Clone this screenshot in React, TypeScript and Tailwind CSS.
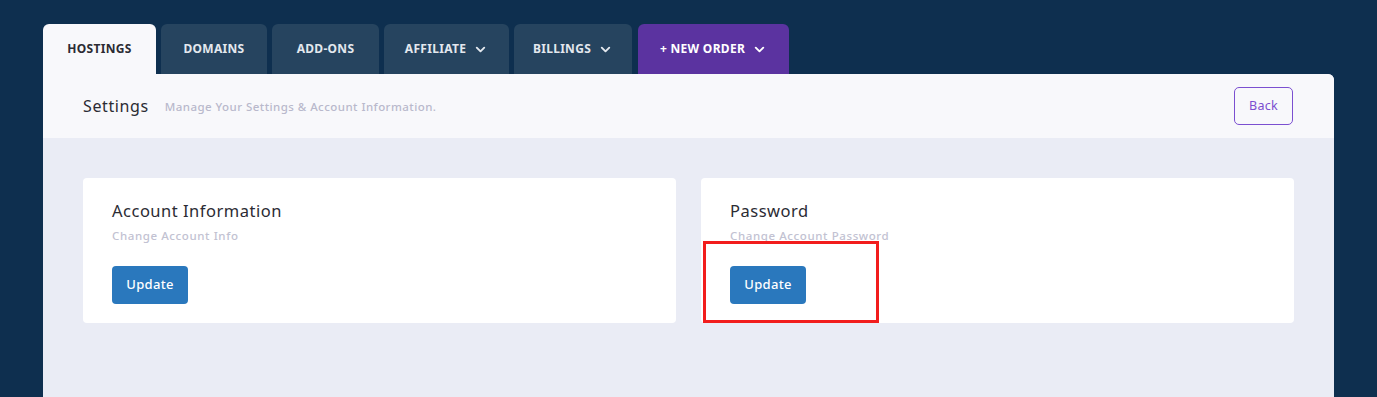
import { ChevronDown } from "lucide-react";

const tabs = [
  { label: "HOSTINGS", width: "w-[113px]", active: true },
  { label: "DOMAINS", width: "w-[106px]" },
  { label: "ADD-ONS", width: "w-[107px]" },
  { label: "AFFILIATE", width: "w-[125px]", menu: true },
  { label: "BILLINGS", width: "w-[118px]", menu: true },
];

const cards = [
  { title: "Account Information", subtitle: "Change Account Info" },
  { title: "Password", subtitle: "Change Account Password", marked: true },
];

export default function App() {
  return (
    <div
      className="min-h-[397px] bg-[#0e2f4f] px-[43px] pt-6"
      style={{ fontFamily: '"Noto Sans", "Open Sans", Roboto, sans-serif' }}
    >
      <div className="flex gap-[5px]">
        {tabs.map((tab) => (
          <div
            key={tab.label}
            className={`flex h-[50px] items-center justify-center gap-[7px] rounded-t-[6px] text-[12px] font-bold tracking-[0.3px] ${tab.width} ${
              tab.active ? "bg-[#f8f8fb] text-[#2b2b33]" : "bg-[#26445f] text-[#e3e8ee]"
            }`}
          >
            {tab.label}
            {tab.menu ? <ChevronDown className="h-[15px] w-[15px]" strokeWidth={3} /> : null}
          </div>
        ))}
        <div className="ml-px flex h-[50px] w-[151px] items-center justify-center gap-[7px] rounded-t-[6px] bg-[#5b33a0] text-[12px] font-bold tracking-[0.3px] text-white">
          + NEW ORDER
          <ChevronDown className="h-[15px] w-[15px]" strokeWidth={3} />
        </div>
      </div>

      <div className="overflow-hidden rounded-tr-[6px] bg-[#eaecf5]">
        <div className="flex h-16 items-center bg-[#f8f8fb] pl-10 pr-[41px]">
          <span className="text-[16px] tracking-[0.6px] text-[#2b2b33]">Settings</span>
          <span className="ml-4 mt-[2px] text-[11.5px] font-medium tracking-[0.45px] text-[#b9b9cc]">
            Manage Your Settings &amp; Account Information.
          </span>
          <button
            type="button"
            className="ml-auto h-[38px] w-[59px] rounded-[5px] border border-[#7b4fd0] text-[12.5px] tracking-[0.3px] text-[#7b4fd0]"
          >
            Back
          </button>
        </div>

        <div className="grid grid-cols-2 gap-[25px] px-10 pb-[74px] pt-10">
          {cards.map((card) => (
            <div key={card.title} className="relative h-[145px] rounded-[4px] bg-white px-[29px] pt-[21px]">
              <div className="text-[16.5px] tracking-[0.5px] text-[#2b2b33]">{card.title}</div>
              <div className="mt-[3px] text-[11.5px] font-medium tracking-[0.6px] text-[#c2c2d2]">{card.subtitle}</div>
              <button
                type="button"
                className="mt-[22px] h-[38px] w-[76px] rounded-[4px] bg-[#2a78bd] text-[13px] font-medium tracking-[0.3px] text-white"
              >
                Update
              </button>
              {card.marked ? (
                <div className="absolute left-[2px] top-[63px] h-[82px] w-[176px] border-[3px] border-[#f21d1d]" />
              ) : null}
            </div>
          ))}
        </div>
      </div>
    </div>
  );
}
